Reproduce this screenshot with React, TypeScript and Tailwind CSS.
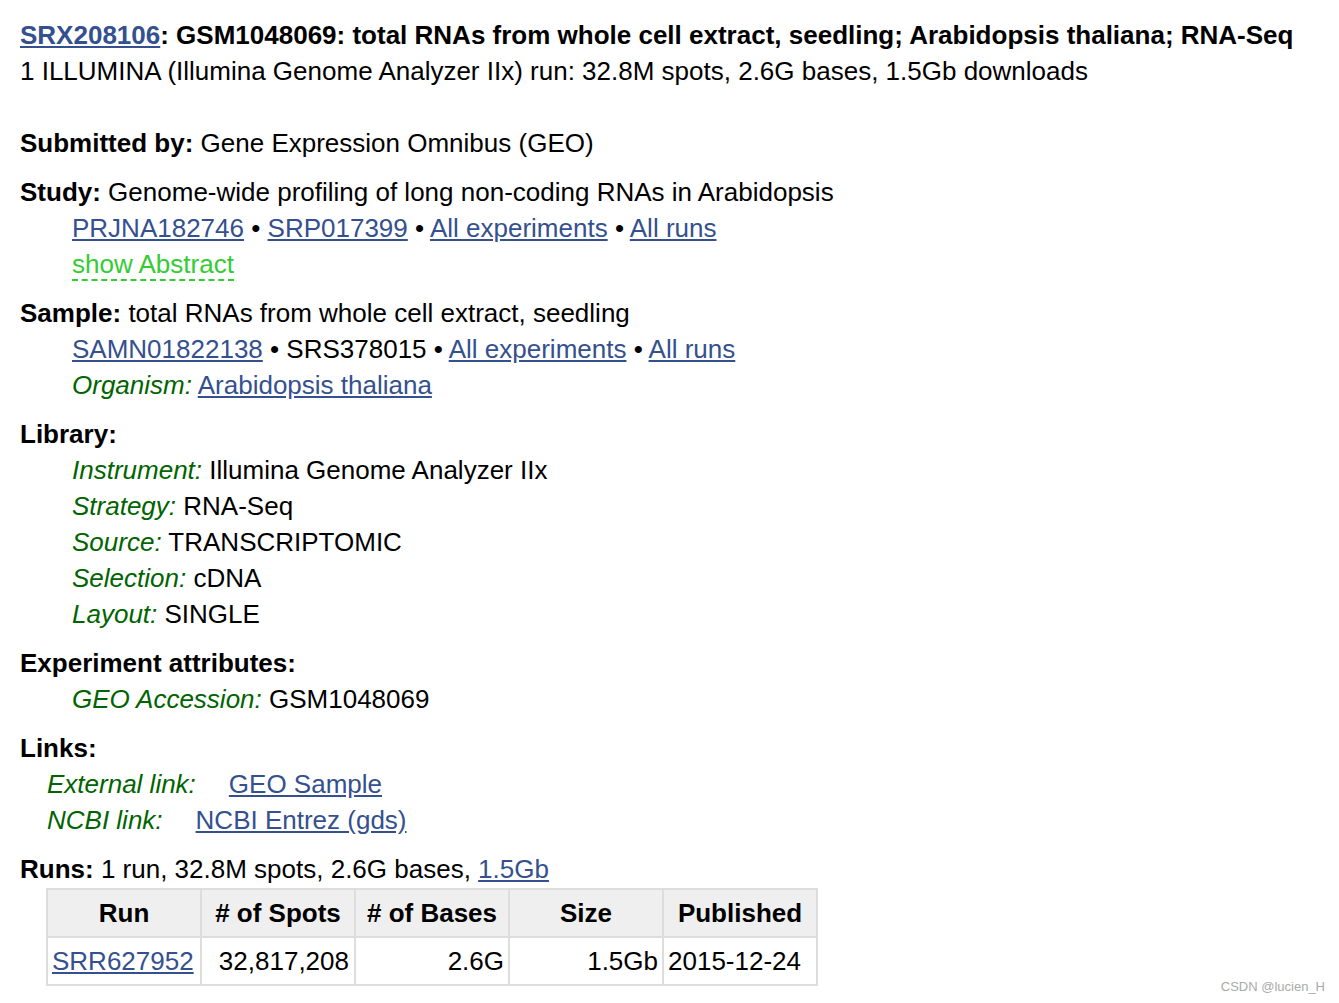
const link = 'text-[#34508f] underline decoration-[#34508f]';
const label = 'italic text-[#006400]';

function Section({ title, children }: { title: React.ReactNode; children?: React.ReactNode }) {
  return (
    <div className="mb-[13px]">
      <div>{title}</div>
      {children}
    </div>
  );
}

export default function App() {
  return (
    <div
      className="relative min-h-screen bg-white text-black text-[26px] leading-[36px] pl-[20px] pt-[17px]"
      style={{ fontFamily: '"Liberation Sans", Arial, sans-serif' }}
    >
      <div className="font-bold">
        <a href="#" className={link}>SRX208106</a>: GSM1048069: total RNAs from whole cell extract, seedling; Arabidopsis thaliana; RNA-Seq
      </div>
      <div>1 ILLUMINA (Illumina Genome Analyzer IIx) run: 32.8M spots, 2.6G bases, 1.5Gb downloads</div>
      <div className="h-[36px]" />

      <Section title={<><b>Submitted by:</b> Gene Expression Omnibus (GEO)</>} />

      <Section title={<><b>Study:</b> Genome-wide profiling of long non-coding RNAs in Arabidopsis</>}>
        <div className="pl-[52px]">
          <div>
            <a href="#" className={link}>PRJNA182746</a> • <a href="#" className={link}>SRP017399</a> •{' '}
            <a href="#" className={link}>All experiments</a> • <a href="#" className={link}>All runs</a>
          </div>
          <div>
            <span className="text-[#33cc33] border-b-2 border-dashed border-[#33cc33] leading-[30px] inline-block">show Abstract</span>
          </div>
        </div>
      </Section>

      <Section title={<><b>Sample:</b> total RNAs from whole cell extract, seedling</>}>
        <div className="pl-[52px]">
          <div>
            <a href="#" className={link}>SAMN01822138</a> • SRS378015 • <a href="#" className={link}>All experiments</a> •{' '}
            <a href="#" className={link}>All runs</a>
          </div>
          <div>
            <span className={label}>Organism:</span> <a href="#" className={link}>Arabidopsis thaliana</a>
          </div>
        </div>
      </Section>

      <Section title={<b>Library:</b>}>
        <div className="pl-[52px]">
          <div><span className={label}>Instrument:</span> Illumina Genome Analyzer IIx</div>
          <div><span className={label}>Strategy:</span> RNA-Seq</div>
          <div><span className={label}>Source:</span> TRANSCRIPTOMIC</div>
          <div><span className={label}>Selection:</span> cDNA</div>
          <div><span className={label}>Layout:</span> SINGLE</div>
        </div>
      </Section>

      <Section title={<b>Experiment attributes:</b>}>
        <div className="pl-[52px]">
          <div><span className={label}>GEO Accession:</span> GSM1048069</div>
        </div>
      </Section>

      <Section title={<b>Links:</b>}>
        <div className="pl-[27px]">
          <div className="flex gap-[33px]">
            <span className={label}>External link:</span>
            <a href="#" className={link}>GEO Sample</a>
          </div>
          <div className="flex gap-[33px]">
            <span className={label}>NCBI link:</span>
            <a href="#" className={link}>NCBI Entrez (gds)</a>
          </div>
        </div>
      </Section>

      <div>
        <b>Runs:</b> 1 run, 32.8M spots, 2.6G bases, <a href="#" className={link}>1.5Gb</a>
      </div>
      <div className="ml-[26px] mt-[1px] inline-grid grid-cols-[repeat(5,152px)] gap-[2px] p-[2px] bg-[#dddddd]">
        {['Run', '# of Spots', '# of Bases', 'Size', 'Published'].map(h => (
          <div key={h} className="bg-[#efefef] font-bold text-center py-[5px] px-[4px]">{h}</div>
        ))}
        <div className="bg-white py-[5px] px-[4px]">
          <a href="#" className={link}>SRR627952</a>
        </div>
        <div className="bg-white py-[5px] px-[5px] text-right">32,817,208</div>
        <div className="bg-white py-[5px] px-[4px] text-right">2.6G</div>
        <div className="bg-white py-[5px] px-[4px] text-right">1.5Gb</div>
        <div className="bg-white py-[5px] px-[4px]">2015-12-24</div>
      </div>

      <div className="absolute right-[14px] bottom-[8px] text-[13px] leading-[16px] text-[#aaaaaa]">CSDN @lucien_H</div>
    </div>
  );
}
